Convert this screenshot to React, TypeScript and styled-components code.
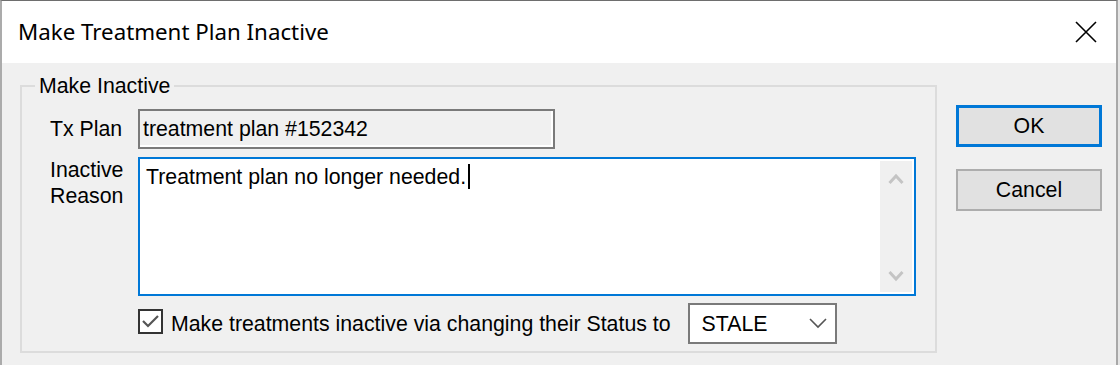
import React from "react";
import styled, { createGlobalStyle } from "styled-components";

const Global = createGlobalStyle`
  html, body { margin: 0; padding: 0; background: #e6e6e6; }
  body { width: 1120px; height: 365px; overflow: hidden; }
  * { box-sizing: border-box; }
`;

const Window = styled.div`
  width: 1118px;
  height: 366px;
  display: flex;
  flex-direction: column;
  background: #f0f0f0;
  border-top: 1px solid #6e6e6e;
  border-left: 2px solid #ababab;
  border-right: 2px solid #a8a8a8;
  font-family: "Liberation Sans", Arial, sans-serif;
  font-size: 21.3px;
  color: #000;
  overflow: hidden;
`;

const TitleBar = styled.div`
  height: 62px;
  flex: 0 0 62px;
  background: #fff;
  display: flex;
  align-items: center;
  justify-content: space-between;
  padding: 0 18px 0 16px;
`;

const Title = styled.div`
  font-family: "Noto Sans", "Open Sans", sans-serif;
  font-size: 22.3px;
  color: #000;
  margin-top: -2px;
`;

const CloseButton = styled.div`
  width: 24px;
  height: 24px;
  display: flex;
  align-items: center;
  justify-content: center;
`;

const Body = styled.div`
  flex: 1;
  display: flex;
  align-items: flex-start;
  padding: 10px 13px 0 18px;
  gap: 19px;
`;

const Group = styled.fieldset`
  width: 917px;
  flex: 0 0 917px;
  margin: 0;
  border: 2px solid #dcdcdc;
  padding: 0;
`;

const Legend = styled.legend`
  margin-left: 13px;
  padding: 0 4px;
  line-height: 26px;
`;

const Grid = styled.div`
  display: grid;
  grid-template-columns: 88px 1fr;
  row-gap: 8px;
  align-items: start;
  padding: 10px 19px 7px 28px;
`;

const Label = styled.div<{ $center?: boolean }>`
  line-height: 26px;
  align-self: ${(p) => (p.$center ? "center" : "start")};
`;

const ReadOnlyBox = styled.div`
  width: 417px;
  height: 40px;
  border: 2px solid #7a7a7a;
  box-shadow: inset -2px -2px 0 #fff;
  background: #f0f0f0;
  padding: 0 0 0 3px;
  display: flex;
  align-items: center;
  line-height: 26px;
`;

const TextArea = styled.div`
  width: 778px;
  height: 139px;
  border: 2px solid #0078d7;
  background: #fff;
  display: flex;
  padding: 2px 2px 2px 0;
`;

const TextContent = styled.div`
  flex: 1;
  padding: 3px 0 0 6px;
  line-height: 26px;
`;

const Caret = styled.span`
  display: inline-block;
  width: 2px;
  height: 25px;
  background: #000;
  vertical-align: -5px;
  margin-left: 2px;
`;

const ScrollBar = styled.div`
  width: 32px;
  background: #f0f0f0;
  display: flex;
  flex-direction: column;
  justify-content: space-between;
  align-items: center;
  padding: 12px 0 10px;
`;

const OptionRow = styled.div`
  grid-column: 2;
  display: flex;
  align-items: center;
  margin-top: -1px;
`;

const CheckBox = styled.div`
  width: 25px;
  height: 25px;
  border: 2px solid #333;
  background: #fff;
  display: flex;
  align-items: center;
  justify-content: center;
  margin: -5px 8px 0 0;
`;

const CheckLabel = styled.span`
  line-height: 26px;
  margin-right: 17px;
`;

const Combo = styled.div`
  width: 149px;
  height: 41px;
  border: 2px solid #7a7a7a;
  background: #fff;
  display: flex;
  align-items: center;
  justify-content: space-between;
  padding: 0 8px 0 12px;
  line-height: 26px;
`;

const Buttons = styled.div`
  display: flex;
  flex-direction: column;
  gap: 22px;
  padding-top: 32px;
`;

const Button = styled.div<{ $default?: boolean }>`
  width: 146px;
  height: 42px;
  background: #e1e1e1;
  border: ${(p) => (p.$default ? "3px solid #0078d7" : "2px solid #adadad")};
  display: flex;
  align-items: center;
  justify-content: center;
  line-height: 26px;
`;

export default function App() {
  return (
    <>
      <Global />
      <Window>
        <TitleBar>
          <Title>Make Treatment Plan Inactive</Title>
          <CloseButton>
            <svg width="22" height="22" viewBox="0 0 22 22">
              <path d="M1 1 L21 21 M21 1 L1 21" stroke="#000" strokeWidth="1.6" />
            </svg>
          </CloseButton>
        </TitleBar>
        <Body>
          <Group>
            <Legend>Make Inactive</Legend>
            <Grid>
              <Label $center>Tx Plan</Label>
              <ReadOnlyBox>treatment plan #152342</ReadOnlyBox>
              <Label>
                Inactive
                <br />
                Reason
              </Label>
              <TextArea>
                <TextContent>
                  Treatment plan no longer needed.
                  <Caret />
                </TextContent>
                <ScrollBar>
                  <svg width="16" height="12" viewBox="0 0 16 12">
                    <path d="M1.5 10 L8 3 L14.5 10" fill="none" stroke="#c4c4c4" strokeWidth="3" />
                  </svg>
                  <svg width="16" height="12" viewBox="0 0 16 12">
                    <path d="M1.5 2 L8 9 L14.5 2" fill="none" stroke="#c4c4c4" strokeWidth="3" />
                  </svg>
                </ScrollBar>
              </TextArea>
              <OptionRow>
                <CheckBox>
                  <svg width="21" height="21" viewBox="0 0 21 21">
                    <path d="M3 10 L8 15 L18 5" fill="none" stroke="#555" strokeWidth="2.2" />
                  </svg>
                </CheckBox>
                <CheckLabel>Make treatments inactive via changing their Status to</CheckLabel>
                <Combo>
                  <span>STALE</span>
                  <svg width="18" height="11" viewBox="0 0 18 11">
                    <path d="M1 1 L9 9 L17 1" fill="none" stroke="#555" strokeWidth="1.6" />
                  </svg>
                </Combo>
              </OptionRow>
            </Grid>
          </Group>
          <Buttons>
            <Button $default>OK</Button>
            <Button>Cancel</Button>
          </Buttons>
        </Body>
      </Window>
    </>
  );
}
